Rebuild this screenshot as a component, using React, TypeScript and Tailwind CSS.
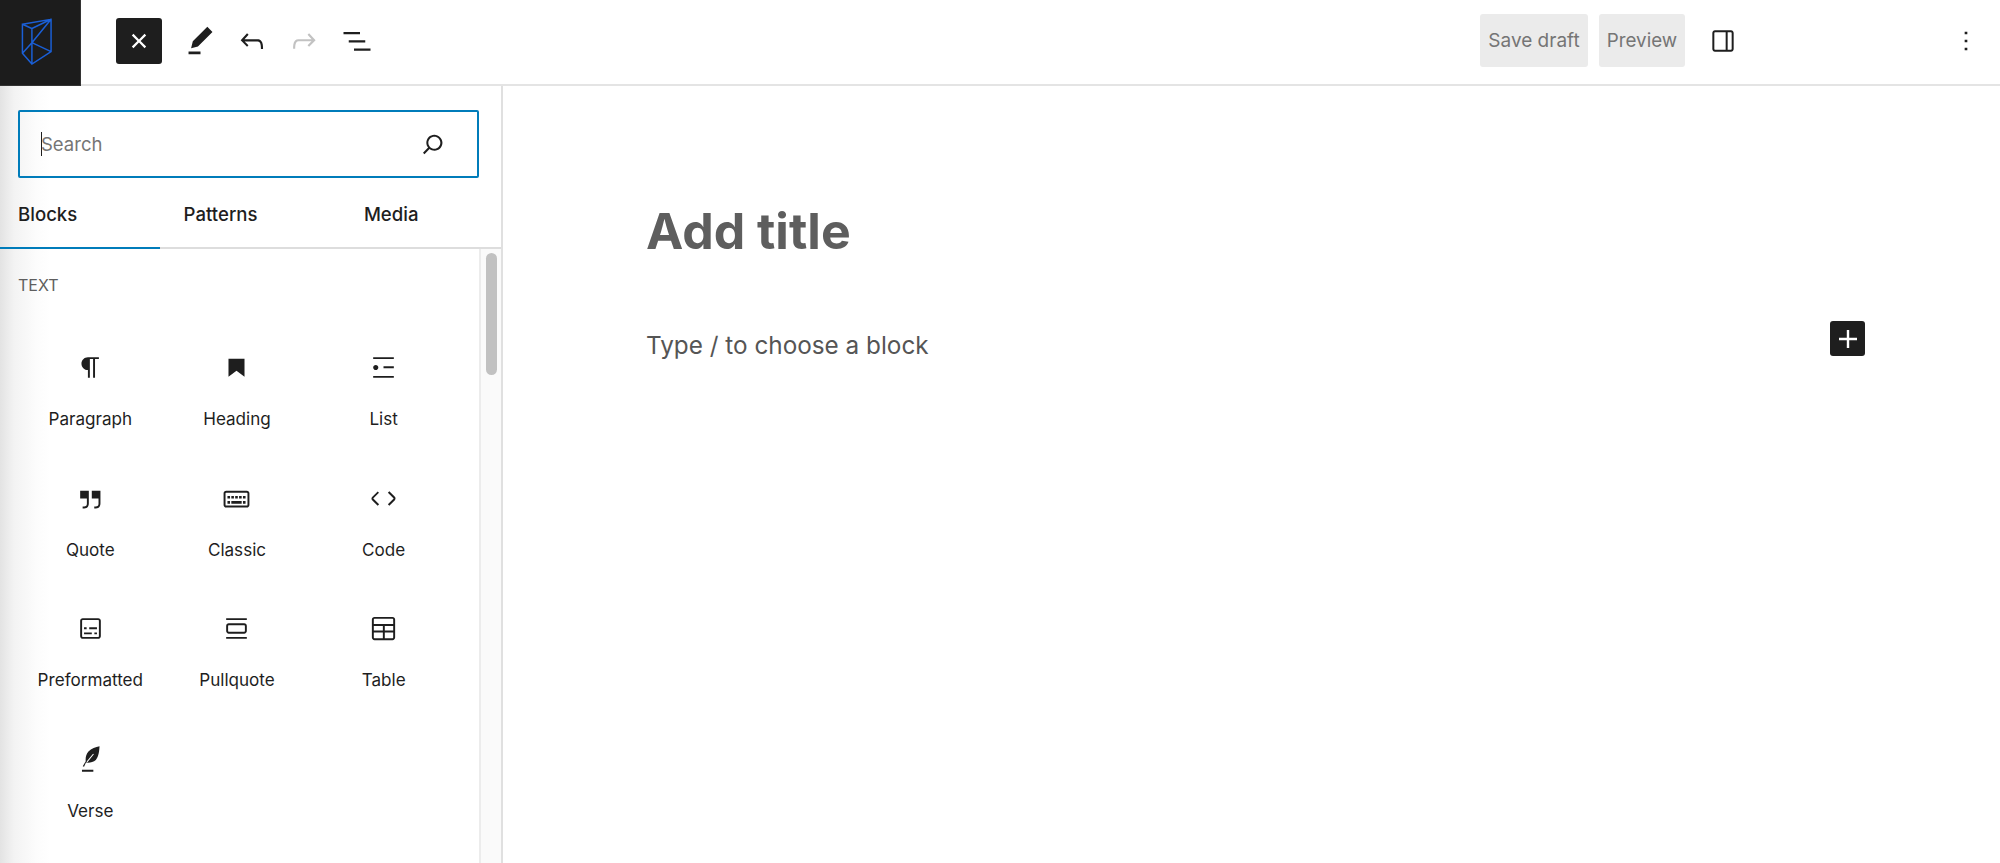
import React from 'react';

const paths: Record<string, string> = {
  close: 'M12 13.06l3.712 3.713 1.061-1.06L13.061 12l3.712-3.712-1.06-1.06L12 10.938 8.288 7.227l-1.061 1.06L10.939 12l-3.712 3.712 1.06 1.061L12 13.061z',
  edit: 'm19 7-3-3-8.5 8.5-1 4 4-1L19 7Zm-7 11.5H5V20h7v-1.5Z',
  undo: 'M18.3 11.7c-.6-.6-1.4-.9-2.3-.9H6.7l2.9-3.3-1.1-1-4.5 5L8.5 16l1-1-2.7-2.7H16c.5 0 .9.2 1.3.5 1 1 1 3.4 1 4.5v.3h1.5v-.2c0-1.5 0-4.3-1.5-5.7z',
  redo: 'M15.6 6.5l-1.1 1 2.9 3.3H8c-.9 0-1.7.3-2.3.9-1.4 1.5-1.4 4.2-1.4 5.6v.2h1.5v-.3c0-1.1 0-3.5 1-4.5.3-.3.7-.5 1.3-.5h9.2L14.5 15l1.1 1.1 4.6-4.6-4.6-5z',
  listView: 'M3 6h11v1.5H3V6Zm3.5 5.5h11V13h-11v-1.5ZM21 17H10v1.5h11V17Z',
  search: 'M13 5c-3.3 0-6 2.7-6 6 0 1.4.5 2.7 1.3 3.7l-3.8 3.8 1.1 1.1 3.8-3.8c1 .8 2.3 1.3 3.7 1.3 3.3 0 6-2.7 6-6S16.3 5 13 5zm0 10.5c-2.5 0-4.5-2-4.5-4.5s2-4.5 4.5-4.5 4.5 2 4.5 4.5-2 4.5-4.5 4.5z',
  drawer: 'M18 4H6c-1.1 0-2 .9-2 2v12c0 1.1.9 2 2 2h12c1.1 0 2-.9 2-2V6c0-1.1-.9-2-2-2zm-4 14.5H6c-.3 0-.5-.2-.5-.5V6c0-.3.2-.5.5-.5h8v13zm4.5-.5c0 .3-.2.5-.5.5h-2.5v-13H18c.3 0 .5.2.5.5v12z',
  more: 'M13 19h-2v-2h2v2zm0-6h-2v-2h2v2zm0-6h-2V5h2v2z',
  plus: 'M18 11.2h-5.2V6h-1.6v5.2H6v1.6h5.2V18h1.6v-5.2H18z',
  paragraph: 'm9.99609 14v-.2251l.00391.0001v6.225h1.5v-14.5h2.5v14.5h1.5v-14.5h3v-1.5h-8.50391c-2.76142 0-5 2.23858-5 5 0 2.7614 2.23858 5 5 5z',
  heading: 'M5.8 5.2v14l6.2-4.6 6.2 4.6v-14z',
  list: 'M4 4v1.5h16V4H4zm8 8.5h8V11h-8v1.5zM4 20h16v-1.5H4V20zm4-8c0-1.1-.9-2-2-2s-2 .9-2 2 .9 2 2 2 2-.9 2-2z',
  quote: 'M13 6v6h5.2v4c0 .8-.2 1.4-.5 1.7-.6.6-1.6.6-2.5.5h-.3v1.5h.5c1 0 2.3-.1 3.3-1 .6-.6 1-1.6 1-2.8V6H13zm-9 6h5.2v4c0 .8-.2 1.4-.5 1.7-.6.6-1.6.6-2.5.5h-.3v1.5h.5c1 0 2.3-.1 3.3-1 .6-.6 1-1.6 1-2.8V6H4v6z',
  classic: 'M20 6H4c-1.1 0-2 .9-2 2v9c0 1.1.9 2 2 2h16c1.1 0 2-.9 2-2V8c0-1.1-.9-2-2-2zm.5 11c0 .3-.2.5-.5.5H4c-.3 0-.5-.2-.5-.5V8c0-.3.2-.5.5-.5h16c.3 0 .5.2.5.5v9zM10 10H8v2h2v-2zm-5 2h2v-2H5v2zm8-2h-2v2h2v-2zm-5 6h8v-2H8v2zm6-4h2v-2h-2v2zm3 0h2v-2h-2v2zm0 4h2v-2h-2v2zM5 16h2v-2H5v2z',
  code: 'M20.8 10.7l-4.3-4.3-1.1 1.1 4.3 4.3c.1.1.1.3 0 .4l-4.3 4.3 1.1 1.1 4.3-4.3c.7-.8.7-1.9 0-2.6zM4.2 11.8l4.3-4.3-1-1-4.3 4.3c-.7.7-.7 1.8 0 2.5l4.3 4.3 1.1-1.1-4.3-4.3c-.2-.1-.2-.3-.1-.4z',
  preformatted: 'M18 4H6c-1.1 0-2 .9-2 2v12c0 1.1.9 2 2 2h12c1.1 0 2-.9 2-2V6c0-1.1-.9-2-2-2zm.5 14c0 .3-.2.5-.5.5H6c-.3 0-.5-.2-.5-.5V6c0-.3.2-.5.5-.5h12c.3 0 .5.2.5.5v12zM7 16.5h6V15H7v1.5zm4-4h6V11h-6v1.5zM9 11H7v1.5h2V11zm6 5.5h2V15h-2v1.5z',
  pullquote: 'M18 8H6c-1.1 0-2 .9-2 2v4c0 1.1.9 2 2 2h12c1.1 0 2-.9 2-2v-4c0-1.1-.9-2-2-2zm.5 6c0 .3-.2.5-.5.5H6c-.3 0-.5-.2-.5-.5v-4c0-.3.2-.5.5-.5h12c.3 0 .5.2.5.5v4zM4 4v1.5h16V4H4zm0 16h16v-1.5H4V20z',
  table: 'M19 3H5c-1.1 0-2 .9-2 2v14c0 1.1.9 2 2 2h14c1.1 0 2-.9 2-2V5c0-1.1-.9-2-2-2zM5 4.5h14c.3 0 .5.2.5.5v3.5h-15V5c0-.3.2-.5.5-.5zm8 5.5h6.5v3.5H13V10zm-1.5 3.5h-7V10h7v3.5zm-7 5.5v-4h7v4.5H5c-.3 0-.5-.2-.5-.5zm14.5.5h-6V15h6.5v4c0 .3-.2.5-.5.5z',
  verse: 'M19 1.8c-3 .8-6.3 1.7-8.6 4-1.8 1.9-2.4 4.9-2.1 7.5L6 17.2l1 .4 1.5-3.2c2.5.3 5.6-.1 7.6-2 2.3-2.5 2.7-7.2 2.9-10.6zM9 13.6l5-6.1.6.5-5 6.1zM5.4 20h8.8v1.5H5.4z',
};

const blocks = [
  { name: 'Paragraph', icon: 'paragraph' },
  { name: 'Heading', icon: 'heading' },
  { name: 'List', icon: 'list' },
  { name: 'Quote', icon: 'quote' },
  { name: 'Classic', icon: 'classic' },
  { name: 'Code', icon: 'code' },
  { name: 'Preformatted', icon: 'preformatted' },
  { name: 'Pullquote', icon: 'pullquote' },
  { name: 'Table', icon: 'table' },
  { name: 'Verse', icon: 'verse' },
];

function Icon({ name, className }: { name: string; className: string }) {
  return (
    <svg viewBox="0 0 24 24" fill="currentColor" className={className}>
      <path d={paths[name]} />
    </svg>
  );
}

function ToolButton({ icon, iconClass, muted }: { icon: string; iconClass: string; muted?: boolean }) {
  return (
    <button className={`flex h-[46px] w-[52px] items-center justify-center ${muted ? 'text-[#c2c2c2]' : 'text-[#1e1e1e]'}`}>
      <Icon name={icon} className={iconClass} />
    </button>
  );
}

function Logo() {
  return (
    <div className="h-[86px] w-[81px] shrink-0 border-r border-b border-[#333] bg-[#1c1c1c]">
      <svg viewBox="0 0 81 85" fill="none" stroke="#1a5fd6" strokeWidth="1.5" className="h-[85px] w-[80px]">
        <path d="M22.7 24 51.7 19V51.7L32.3 64.3 22.7 53.3ZM22.7 24 32.3 28.3V64.3M32.3 28.3 51.7 19 32.3 42.7 22.7 53.3M32.3 42.7 51.7 51.7" />
      </svg>
    </div>
  );
}

export default function App() {
  return (
    <div className="flex h-[863px] w-[2000px] flex-col overflow-hidden bg-white font-['Inter',sans-serif]">
      {/* Top bar */}
      <header className="flex h-[86px] shrink-0 border-b-2 border-[#e4e4e4]">
        <Logo />
        <div className="flex flex-1 items-center pb-[3px]">
          <button className="ml-[35px] mr-[12px] flex size-[46px] items-center justify-center rounded-[3px] bg-[#1e1e1e] text-white">
            <Icon name="close" className="size-[36px]" />
          </button>
          <ToolButton icon="edit" iconClass="size-[41px]" />
          <ToolButton icon="undo" iconClass="size-[34px]" />
          <ToolButton icon="redo" iconClass="size-[34px]" muted />
          <div className="pl-[1px]">
            <ToolButton icon="listView" iconClass="size-[36px]" />
          </div>

          <div className="ml-auto flex items-center">
            <button className="h-[53px] w-[108px] rounded-[3px] bg-[#ebebeb] pt-[2px] text-[19px] text-[#757575]">Save draft</button>
            <button className="ml-[11px] h-[53px] w-[86px] rounded-[3px] bg-[#ebebeb] pt-[2px] text-[18.8px] text-[#757575]">Preview</button>
            <button className="ml-[15px] flex size-[46px] items-center justify-center text-[#1e1e1e]">
              <Icon name="drawer" className="size-[32px]" />
            </button>
            <button className="ml-[197px] mr-[11px] flex size-[46px] items-center justify-center text-[#1e1e1e]">
              <Icon name="more" className="size-[32px]" />
            </button>
          </div>
        </div>
      </header>

      <div className="flex min-h-0 flex-1">
        {/* Inserter sidebar */}
        <aside className="flex w-[503px] shrink-0 flex-col border-r-2 border-[#e0e0e0] bg-[linear-gradient(90deg,#e3e3e3_0,#f3f3f3_14px,#fcfcfc_36px,#fff_50px)]">
          <div className="mx-[18px] mt-[24px] flex h-[68px] w-[461px] items-center rounded-[2px] border-2 border-[#007cba] pl-[21px] pr-[28px]">
            <span className="-mr-px h-[24px] w-px bg-[#1e1e1e]" />
            <span className="pt-[2px] text-[18.5px] text-[#757575]">Search</span>
            <Icon name="search" className="ml-auto size-[32px] text-[#1e1e1e]" />
          </div>

          <div className="flex h-[71px] shrink-0 border-b-2 border-[#ddd] text-[18.6px] font-[450] text-[#1e1e1e]">
            <div className="-mb-[2px] flex h-[71px] w-[160px] items-center border-b-2 border-[#007cba] pl-[18px] pt-[4px]">Blocks</div>
            <div className="flex w-[122px] items-center justify-center pt-[4px]">Patterns</div>
            <div className="flex w-[220px] items-center justify-center pt-[4px]">Media</div>
          </div>

          <div className="flex min-h-0 flex-1">
            <div className="w-[479px] pl-[17px] pt-[26px]">
              <h2 className="ml-px h-[20px] text-[16px] leading-[20px] text-[#5e5e5e] uppercase">Text</h2>
              <div className="mt-[57px] grid w-[440px] grid-cols-3 auto-rows-[130.5px]">
                {blocks.map((block) => (
                  <button key={block.name} className="flex flex-col items-center text-[#1e1e1e]">
                    <Icon name={block.icon} className="size-[31px]" />
                    <span className="mt-[26px] text-[17.1px] leading-[20px]">{block.name}</span>
                  </button>
                ))}
              </div>
            </div>
            {/* Scrollbar */}
            <div className="w-[22px] border-l-2 border-[#ececec] bg-[#fafafa] pl-[5px] pt-[4px]">
              <div className="h-[122px] w-[11px] rounded-full bg-[#c1c1c1]" />
            </div>
          </div>
        </aside>

        {/* Editor canvas */}
        <main className="flex-1 pl-[143px] pt-[114px]">
          <h1 className="text-[50px] leading-[62px] font-bold text-[#5e5e5e]">Add title</h1>
          <div className="mt-[64px] flex w-[1219px] items-start justify-between">
            <p className="text-[24.3px] leading-[38px] text-[#555]">Type / to choose a block</p>
            <button className="-mt-[5px] flex size-[35px] items-center justify-center rounded-[3px] bg-[#1e1e1e] text-white">
              <Icon name="plus" className="size-[36px] shrink-0" />
            </button>
          </div>
        </main>
      </div>
    </div>
  );
}
